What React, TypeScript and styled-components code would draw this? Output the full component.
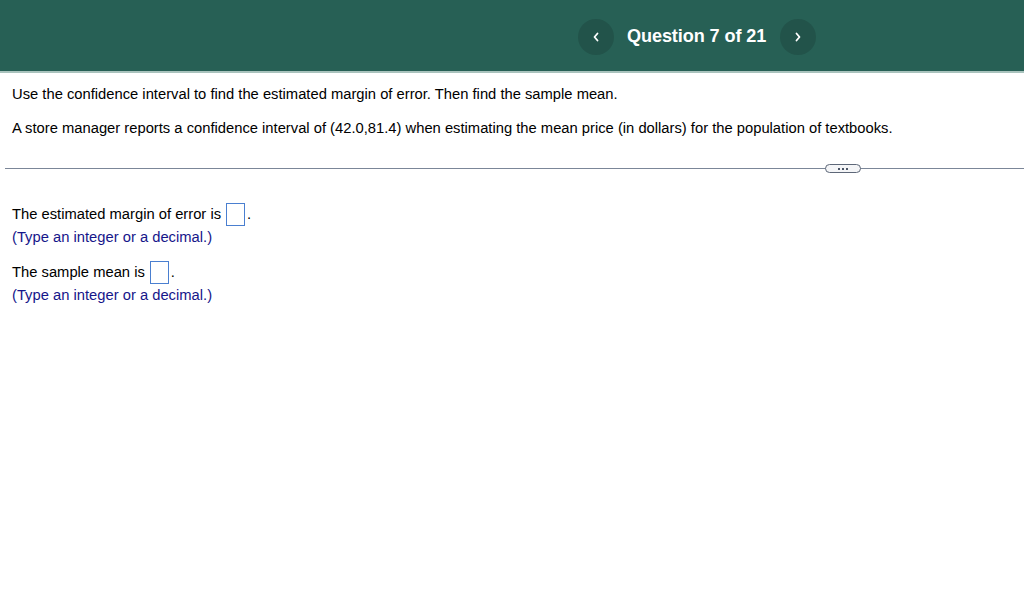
import React from "react";
import styled, { createGlobalStyle } from "styled-components";

const Global = createGlobalStyle`
  html, body { margin: 0; padding: 0; background: #fff; }
  body { font-family: "Liberation Sans", Arial, sans-serif; color: #000; }
`;

const Header = styled.header`
  height: 71px;
  background: #276055;
  border-bottom: 2px solid #a9c3bd;
  display: flex;
  align-items: center;
  justify-content: flex-start;
  padding-left: 578px;
  box-sizing: content-box;
`;

const NavButton = styled.button`
  width: 36px;
  height: 36px;
  border-radius: 50%;
  border: none;
  background: #22534a;
  color: #fff;
  display: flex;
  align-items: center;
  justify-content: center;
  padding: 0;
  margin-top: 2px;
`;

const Title = styled.div`
  font-family: "Liberation Sans", Arial, sans-serif;
  font-weight: bold;
  font-size: 18.1px;
  color: #fff;
  margin: 2px 14px 0 13px;
  letter-spacing: -0.1px;
`;

const Body = styled.main`
  padding: 13px 12px 0 12px;
`;

const Para = styled.p<{ $mt?: number }>`
  margin: ${(p) => p.$mt ?? 0}px 0 0 0;
  font-size: 14.75px;
  line-height: 17px;
`;

const DividerRow = styled.div`
  position: relative;
  margin: 27px -12px 0 -7px;
  height: 9px;
  display: flex;
  align-items: center;
`;

const Line = styled.div`
  flex: 1;
  height: 1px;
  background: #7b8698;
`;

const MoreButton = styled.div`
  position: absolute;
  left: 820px;
  top: 0;
  width: 34px;
  height: 7px;
  border: 1px solid #5d6778;
  border-radius: 5px;
  background: #f4f5f7;
  display: flex;
  align-items: center;
  justify-content: center;
  gap: 2px;
`;

const Dot = styled.span`
  width: 2px;
  height: 2px;
  background: #4b5566;
`;

const Answers = styled.section`
  margin-top: 30px;
  display: flex;
  flex-direction: column;
  gap: 15px;
`;

const Item = styled.div`
  display: flex;
  flex-direction: column;
  gap: 3px;
`;

const Line1 = styled.div`
  font-size: 14.75px;
  line-height: 17px;
  display: flex;
  align-items: center;
`;

const Box = styled.span`
  display: inline-block;
  width: 17px;
  height: 21px;
  border: 1px solid #4a7fd0;
  margin: 0 2px 0 5px;
`;

const Hint = styled.div`
  font-size: 14.75px;
  line-height: 17px;
  color: #16168a;
`;

const Chevron = ({ dir }: { dir: "l" | "r" }) => (
  <svg width="8" height="10" viewBox="0 0 8 10">
    <path
      d={dir === "l" ? "M5.5 1.5 L2.5 5 L5.5 8.5" : "M2.5 1.5 L5.5 5 L2.5 8.5"}
      fill="none"
      stroke="#fff"
      strokeWidth="1.8"
      strokeLinecap="round"
      strokeLinejoin="round"
    />
  </svg>
);

export default function App() {
  return (
    <>
      <Global />
      <Header>
        <NavButton aria-label="previous">
          <Chevron dir="l" />
        </NavButton>
        <Title>Question 7 of 21</Title>
        <NavButton aria-label="next">
          <Chevron dir="r" />
        </NavButton>
      </Header>
      <Body>
        <Para $mt={0}>
          Use the confidence interval to find the estimated margin of error. Then find the sample mean.
        </Para>
        <Para $mt={17}>
          A store manager reports a confidence interval of (42.0,81.4) when estimating the mean price (in dollars) for the population of textbooks.
        </Para>
        <DividerRow>
          <Line />
          <MoreButton>
            <Dot />
            <Dot />
            <Dot />
          </MoreButton>
        </DividerRow>
        <Answers>
          <Item>
            <Line1>
              The estimated margin of error is <Box />.
            </Line1>
            <Hint>(Type an integer or a decimal.)</Hint>
          </Item>
          <Item>
            <Line1>
              The sample mean is <Box />.
            </Line1>
            <Hint>(Type an integer or a decimal.)</Hint>
          </Item>
        </Answers>
      </Body>
    </>
  );
}
